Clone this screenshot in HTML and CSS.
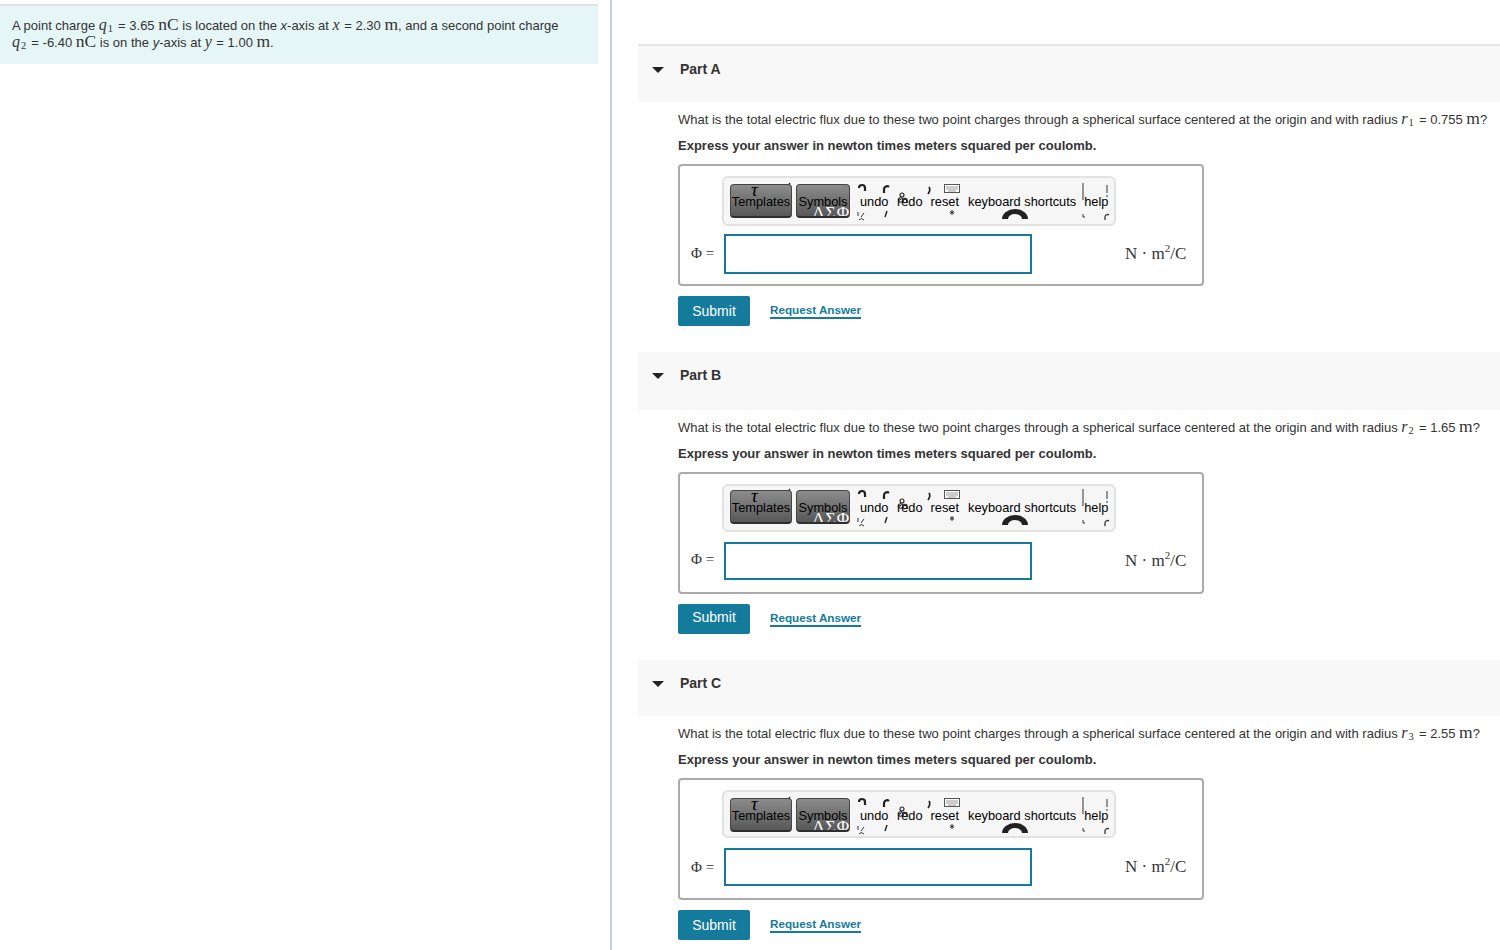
FILE: index.html
```html
<!DOCTYPE html>
<html>
<head>
  <title>Point charges - Electric flux</title>
  <link rel="stylesheet" href="styles.css">
</head>
<body>
<svg class="sprite" width="0" height="0">
  <symbol id="toolbar-bits" viewBox="0 0 394 50">
    <path d="M67 15 q-2 -5 1 -8" fill="none" stroke="#222" stroke-width="1.300"/>
    <path d="M137 12 a3 3 0 0 1 6 0 l0 3" fill="none" stroke="#222" stroke-width="2.200"/>
    <path d="M162 17 l0 -4 a3 3 0 0 1 5 -2" fill="none" stroke="#222" stroke-width="2.200"/>
    <circle cx="180" cy="19" r="2" fill="none" stroke="#222" stroke-width="1.100"/>
    <circle cx="178.500" cy="24" r="2.200" fill="none" stroke="#222" stroke-width="1.100"/>
    <circle cx="183" cy="24.500" r="2.200" fill="none" stroke="#222" stroke-width="1.100"/>
    <path d="M207 11 q2 3 -1 7" fill="none" stroke="#222" stroke-width="1.700"/>
    <rect x="222.500" y="8.500" width="15" height="8" fill="#fff" stroke="#555"/>
    <path d="M224 11 h12 M224 13 h12 M226 15 h8" stroke="#999"/>
    <path d="M136 36 v4 M139 41 l3 -4" stroke="#333" stroke-width="1"/>
    <path d="M137 44 q2 -3 5 0" fill="none" stroke="#333"/>
    <path d="M165 35 l-2 6" stroke="#222" stroke-width="1.400"/>
    <path d="M230 34 v5 M228 35.500 l4 2 M232 35.500 l-4 2" stroke="#222" stroke-width=".9"/>
    <path d="M280 43 a13 10 0 0 1 26 0 l-6 0 a7 5 0 0 0 -14 0 z" fill="#222"/>
    <path d="M361 7 v17" stroke="#333"/>
    <path d="M385 9 v8 M385 19 v2" stroke="#333"/>
    <path d="M361 38 v3 h2" fill="none" stroke="#333"/>
    <path d="M383 44 v-3 a2.500 2.500 0 0 1 4 -2" fill="none" stroke="#333" stroke-width="1.300"/>
  </symbol>
</svg>

<div class="page">
  <div class="left">
    <div class="intro">
      A point charge <span class="m"><i>q</i><sub>1</sub></span> = 3.65 <span class="m">nC</span> is located on the <i>x</i>-axis at <span class="m"><i>x</i></span> = 2.30 <span class="m">m</span>, and a second point charge<br>
      <span class="m"><i>q</i><sub>2</sub></span> = -6.40 <span class="m">nC</span> is on the <i>y</i>-axis at <span class="m"><i>y</i></span> = 1.00 <span class="m">m</span>.
    </div>
  </div>

  <div class="right">
    <div class="part part-a">
      <div class="part-head"><span class="arrow"></span><span class="part-name">Part A</span></div>
      <div class="part-body">
        <p class="question">What is the total electric flux due to these two point charges through a spherical surface centered at the origin and with radius <span class="m"><i>r</i><sub>1</sub></span> = 0.755 <span class="m">m</span>?</p>
        <p class="express">Express your answer in newton times meters squared per coulomb.</p>
        <div class="answer-box">
          <div class="toolbar">
            <svg class="bits"><use href="#toolbar-bits"/></svg>
            <span class="tool-btn btn-templates">Templates<span class="tau">τ</span></span>
            <span class="tool-btn btn-symbols">Symbols<span class="greek">ΔΣΦ</span></span>
            <span class="tool t-undo">undo</span><span class="tool t-redo">redo</span><span class="tool t-reset">reset</span><span class="tool t-keys">keyboard shortcuts</span><span class="tool t-help">help</span>
          </div>
          <div class="answer-row">
            <span class="phi">Φ =</span>
            <input class="answer-input" type="text">
            <span class="unit">N · m<sup>2</sup>/C</span>
          </div>
        </div>
        <div class="actions"><a class="submit">Submit</a><a class="request">Request Answer</a></div>
      </div>
    </div>

    <div class="part part-b">
      <div class="part-head"><span class="arrow"></span><span class="part-name">Part B</span></div>
      <div class="part-body">
        <p class="question">What is the total electric flux due to these two point charges through a spherical surface centered at the origin and with radius <span class="m"><i>r</i><sub>2</sub></span> = 1.65 <span class="m">m</span>?</p>
        <p class="express">Express your answer in newton times meters squared per coulomb.</p>
        <div class="answer-box">
          <div class="toolbar">
            <svg class="bits"><use href="#toolbar-bits"/></svg>
            <span class="tool-btn btn-templates">Templates<span class="tau">τ</span></span>
            <span class="tool-btn btn-symbols">Symbols<span class="greek">ΔΣΦ</span></span>
            <span class="tool t-undo">undo</span><span class="tool t-redo">redo</span><span class="tool t-reset">reset</span><span class="tool t-keys">keyboard shortcuts</span><span class="tool t-help">help</span>
          </div>
          <div class="answer-row">
            <span class="phi">Φ =</span>
            <input class="answer-input" type="text">
            <span class="unit">N · m<sup>2</sup>/C</span>
          </div>
        </div>
        <div class="actions"><a class="submit">Submit</a><a class="request">Request Answer</a></div>
      </div>
    </div>

    <div class="part part-c">
      <div class="part-head"><span class="arrow"></span><span class="part-name">Part C</span></div>
      <div class="part-body">
        <p class="question">What is the total electric flux due to these two point charges through a spherical surface centered at the origin and with radius <span class="m"><i>r</i><sub>3</sub></span> = 2.55 <span class="m">m</span>?</p>
        <p class="express">Express your answer in newton times meters squared per coulomb.</p>
        <div class="answer-box">
          <div class="toolbar">
            <svg class="bits"><use href="#toolbar-bits"/></svg>
            <span class="tool-btn btn-templates">Templates<span class="tau">τ</span></span>
            <span class="tool-btn btn-symbols">Symbols<span class="greek">ΔΣΦ</span></span>
            <span class="tool t-undo">undo</span><span class="tool t-redo">redo</span><span class="tool t-reset">reset</span><span class="tool t-keys">keyboard shortcuts</span><span class="tool t-help">help</span>
          </div>
          <div class="answer-row">
            <span class="phi">Φ =</span>
            <input class="answer-input" type="text">
            <span class="unit">N · m<sup>2</sup>/C</span>
          </div>
        </div>
        <div class="actions"><a class="submit">Submit</a><a class="request">Request Answer</a></div>
      </div>
    </div>
  </div>
</div>
</body>
</html>
```

FILE: styles.css
```css
html, body {
    margin: 0;
    padding: 0;
    height: 950px;
    overflow: hidden;
    background-color: #ffffff;
}

body {
    font-family: "Liberation Sans", Arial, sans-serif;
    font-size: 13px;
    color: #333333;
}

.sprite {
    display: block;
    height: 0;
}

.page {
    display: flex;
    height: 950px;
}

.left {
    flex: none;
    box-sizing: border-box;
    width: 612px;
    padding-top: 4px;
    border-right: 2px solid #c9cfdb;
}

.intro {
    width: 586px;
    height: 34px;
    padding: 11px 0 13px 12px;
    background-color: #e6f6f7;
    border-top: 2px solid #dfe3e5;
    line-height: 17px;
    white-space: nowrap;
}

.m {
    font-family: "Liberation Serif", serif;
    font-size: 17.5px;
    line-height: 0;
}

.m i {
    font-size: 16px;
    margin-right: 1px;
}

.m sub {
    font-size: 10.5px;
    line-height: 0;
    margin-right: 1.5px;
    vertical-align: -2px;
}

.right {
    flex: 1;
    margin-left: 26px;
    padding-top: 44px;
}

.part {
    margin-bottom: 26px;
}

.part-head {
    display: flex;
    align-items: flex-start;
    box-sizing: border-box;
    height: 56px;
    padding: 14px 0 0 14px;
    background-color: #f8f8f8;
}

.part-a .part-head {
    height: 58px;
    padding-top: 14px;
    border-top: 2px solid #e4e4e4;
}

.part-b .part-head {
    height: 58px;
}

.arrow {
    width: 0;
    height: 0;
    margin: 7px 16px 0 0;
    border-left: 6px solid transparent;
    border-right: 6px solid transparent;
    border-top: 6px solid #222222;
}

.part-name {
    font-weight: bold;
    font-size: 14px;
    line-height: 18px;
}

.part-body {
    padding-left: 40px;
}

.question {
    margin: 0;
    padding-top: 8px;
    line-height: 20px;
    white-space: nowrap;
}

.express {
    margin: 6px 0 8px;
    font-weight: bold;
    line-height: 20px;
}

.answer-box {
    width: 522px;
    height: 118px;
    border: 2px solid #aaaaaa;
    border-radius: 4px;
}

.toolbar {
    position: relative;
    display: flex;
    align-items: flex-start;
    box-sizing: border-box;
    width: 394px;
    height: 50px;
    margin: 10px 0 0 42px;
    padding: 6px 0 0 6px;
    background-color: #f6f6f6;
    border: 2px solid #e2e2e2;
    border-radius: 6px;
    color: #000000;
    font-size: 12.8px;
}

.part-b .toolbar,
.part-c .toolbar {
    height: 48px;
}

.part-b .toolbar {
    padding-top: 4px;
}

.bits {
    position: absolute;
    left: -2px;
    top: -2px;
    width: 394px;
    height: 50px;
    pointer-events: none;
}

.part-b .bits {
    top: -4px;
}

.tool-btn {
    position: relative;
    display: flex;
    align-items: center;
    justify-content: center;
    flex: none;
    box-sizing: border-box;
    height: 34px;
    padding-top: 2px;
    overflow: hidden;
    background: linear-gradient(#8c8c8c, #585858);
    border: 1px solid #444444;
    border-bottom: 2px solid #2e2e2e;
    border-radius: 4px;
    white-space: nowrap;
}

.btn-templates {
    width: 62px;
}

.btn-symbols {
    width: 54px;
    margin-left: 4px;
}

.tau {
    position: absolute;
    left: 20px;
    top: -5px;
    font-family: "Liberation Serif", serif;
    font-style: italic;
    font-size: 19px;
    line-height: 20px;
}

.greek {
    position: absolute;
    left: 16px;
    top: 19px;
    font-family: "Liberation Serif", serif;
    font-size: 17px;
    line-height: 18px;
    color: #ffffff;
    letter-spacing: 1.5px;
}

.tool {
    line-height: 36px;
    white-space: nowrap;
}

.t-undo {
    margin-left: 10px;
}

.t-redo {
    margin-left: 8.5px;
}

.t-reset {
    margin-left: 8px;
}

.t-keys {
    margin-left: 9px;
}

.t-help {
    margin-left: 8px;
}

.answer-row {
    display: flex;
    align-items: center;
    height: 40px;
    margin-top: 8px;
    padding-left: 11px;
}

.part-b .answer-row,
.part-c .answer-row {
    height: 38px;
    margin-top: 10px;
}

.phi {
    flex: none;
    width: 33px;
    margin-bottom: 2px;
    font-family: "Liberation Serif", serif;
    font-size: 15px;
    white-space: nowrap;
}

.part-b .phi {
    margin-bottom: 4px;
}

.part-c .phi {
    margin-bottom: 0;
}

.answer-input {
    box-sizing: border-box;
    width: 308px;
    height: 100%;
    margin: 0;
    padding: 0;
    background-color: #ffffff;
    border: 2px solid #147b9c;
    border-radius: 0;
    outline: none;
}

.unit {
    margin-left: 93px;
    font-family: "Liberation Serif", serif;
    font-size: 17px;
    white-space: nowrap;
}

.unit sup {
    font-size: 11px;
    line-height: 0;
}

.actions {
    display: flex;
    align-items: center;
    margin-top: 10px;
}

.submit {
    display: block;
    width: 72px;
    height: 30px;
    line-height: 30px;
    text-align: center;
    background-color: #147b9c;
    border-radius: 2px;
    color: #ffffff;
    font-size: 14px;
}

.part-b .submit {
    line-height: 27px;
}

.request {
    margin-left: 20px;
    color: #147b9c;
    font-size: 11.7px;
    font-weight: bold;
    line-height: 14px;
    border-bottom: 2px solid #147b9c;
}
```
